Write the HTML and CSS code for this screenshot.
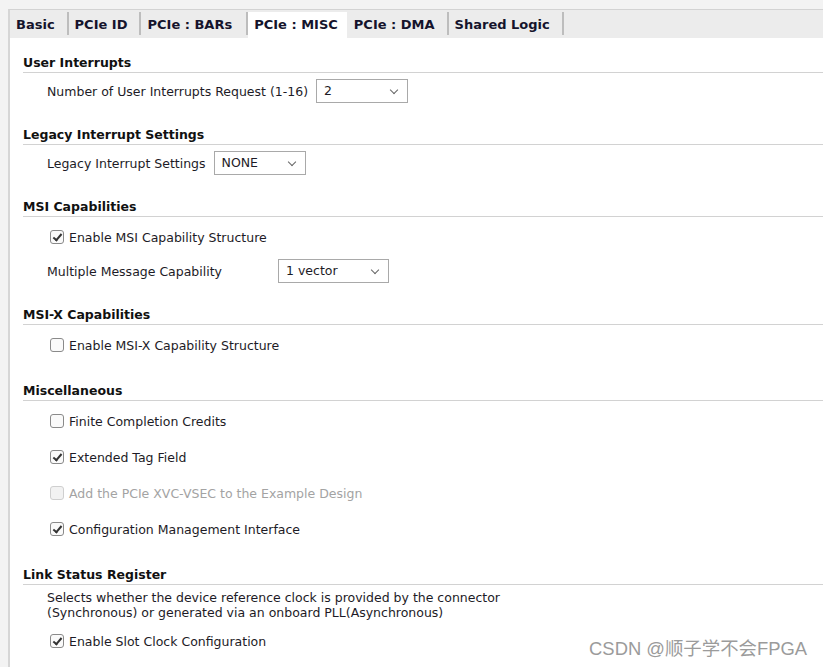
FILE: index.html
```html
<!DOCTYPE html>
<html lang="en">
<head>
    <meta charset="UTF-8">
    <title>PCIe : MISC</title>
    <link rel="stylesheet" href="styles.css">
</head>
<body>
    <div class="panel">
        <div class="tabs">
            <div class="tab first">Basic</div>
            <div class="tab">PCIe ID</div>
            <div class="tab before-active">PCIe : BARs</div>
            <div class="tab active">PCIe : MISC</div>
            <div class="tab after-active">PCIe : DMA</div>
            <div class="tab">Shared Logic</div>
        </div>

        <div class="content">
            <div class="section">
                <h2>User Interrupts</h2>
                <div class="rows">
                    <div class="row">
                        <span class="label">Number of User Interrupts Request (1-16)</span>
                        <div class="select">2<span class="chev"></span></div>
                    </div>
                </div>
            </div>

            <div class="section">
                <h2>Legacy Interrupt Settings</h2>
                <div class="rows">
                    <div class="row">
                        <span class="label">Legacy Interrupt Settings</span>
                        <div class="select">NONE<span class="chev"></span></div>
                    </div>
                </div>
            </div>

            <div class="section">
                <h2>MSI Capabilities</h2>
                <div class="rows">
                    <label class="row check"><span class="box checked"></span>Enable MSI Capability Structure</label>
                    <div class="row">
                        <span class="label wide">Multiple Message Capability</span>
                        <div class="select long">1 vector<span class="chev"></span></div>
                    </div>
                </div>
            </div>

            <div class="section">
                <h2>MSI-X Capabilities</h2>
                <div class="rows">
                    <label class="row check"><span class="box"></span>Enable MSI-X Capability Structure</label>
                </div>
            </div>

            <div class="section">
                <h2>Miscellaneous</h2>
                <div class="rows">
                    <label class="row check"><span class="box"></span>Finite Completion Credits</label>
                    <label class="row check"><span class="box checked"></span>Extended Tag Field</label>
                    <label class="row check disabled"><span class="box"></span>Add the PCIe XVC-VSEC to the Example Design</label>
                    <label class="row check"><span class="box checked"></span>Configuration Management Interface</label>
                </div>
            </div>

            <div class="section">
                <h2>Link Status Register</h2>
                <div class="rows">
                    <p class="desc">Selects whether the device reference clock is provided by the connector<br>(Synchronous) or generated via an onboard PLL(Asynchronous)</p>
                    <label class="row check"><span class="box checked"></span>Enable Slot Clock Configuration</label>
                </div>
            </div>
        </div>
    </div>

    <div class="watermark">CSDN @顺子学不会FPGA</div>
</body>
</html>
```
FILE: styles.css
```css
body {
    margin: 0;
    background-color: #f3f3f3;
    font-family: 'DejaVu Sans', sans-serif;
    font-size: 12.5px;
    color: #1d1b26;
    height: 667px;
    overflow: hidden;
}

.panel {
    box-sizing: border-box;
    margin: 9px 0 0 8px;
    border-top: 1px solid #d3d3d3;
    border-left: 2px solid #d6d6d6;
    background-color: #ffffff;
    height: 658px;
}

.tabs {
    display: flex;
    height: 28px;
    background-color: #ececec;
}

.tab {
    display: flex;
    align-items: center;
    padding: 1px 12px 0 6px;
    margin: 2px 0 3px;
    border-right: 2px solid #bdbdbd;
    font-weight: bold;
    font-size: 13px;
    color: #15142c;
}

.tab.before-active {
    padding-right: 14px;
}

.tab.active {
    background-color: #ffffff;
    border-right: none;
    margin-bottom: 0;
    padding: 1px 9px 3px 6px;
}

.tab.after-active {
    padding-left: 7px;
}

.content {
    padding: 17px 0 0 13px;
}

.section {
    margin-bottom: 22px;
}

h2 {
    margin: 0;
    font-size: 12.5px;
    line-height: 16px;
    font-weight: bold;
    color: #111111;
    padding-bottom: 1px;
    border-bottom: 1px solid #d2d2d2;
}

.rows {
    display: flex;
    flex-direction: column;
    gap: 4px;
    padding: 4px 0 0 24px;
}

.row {
    display: flex;
    align-items: center;
    height: 28px;
}

.row.check {
    height: 32px;
    padding-left: 3px;
}

.label {
    margin-right: 8px;
}

.label.wide {
    width: 231px;
    margin-right: 0;
}

.select {
    position: relative;
    box-sizing: border-box;
    width: 92px;
    height: 24px;
    border: 1px solid #a9a9a9;
    padding: 0 0 0 7px;
    line-height: 22px;
    background-color: #ffffff;
}

.select.long {
    width: 111px;
}

.chev {
    position: absolute;
    right: 10px;
    top: 7px;
    width: 5px;
    height: 5px;
    border-right: 1.5px solid #666666;
    border-bottom: 1.5px solid #666666;
    transform: rotate(45deg);
}

.box {
    box-sizing: border-box;
    width: 14px;
    height: 14px;
    border: 1px solid #8a8a8a;
    border-radius: 3px;
    margin-right: 5px;
    background-color: #fafafa;
    position: relative;
}

.box.checked::after {
    content: "";
    position: absolute;
    left: 4px;
    top: 1px;
    width: 3px;
    height: 7px;
    border-right: 2px solid #333333;
    border-bottom: 2px solid #333333;
    transform: rotate(40deg);
}

.disabled {
    color: #a3a3a3;
}

.disabled .box {
    border-color: #cfcfcf;
    background-color: #f2f2f2;
}

.desc {
    margin: 1px 0 1px;
    line-height: 15px;
}

.watermark {
    position: absolute;
    right: 16px;
    top: 634px;
    font-family: 'Liberation Sans', 'Noto Sans CJK SC', sans-serif;
    font-size: 18.4px;
    color: #9b9b9b;
    text-shadow: 0 0 1px #ffffff;
}
```
